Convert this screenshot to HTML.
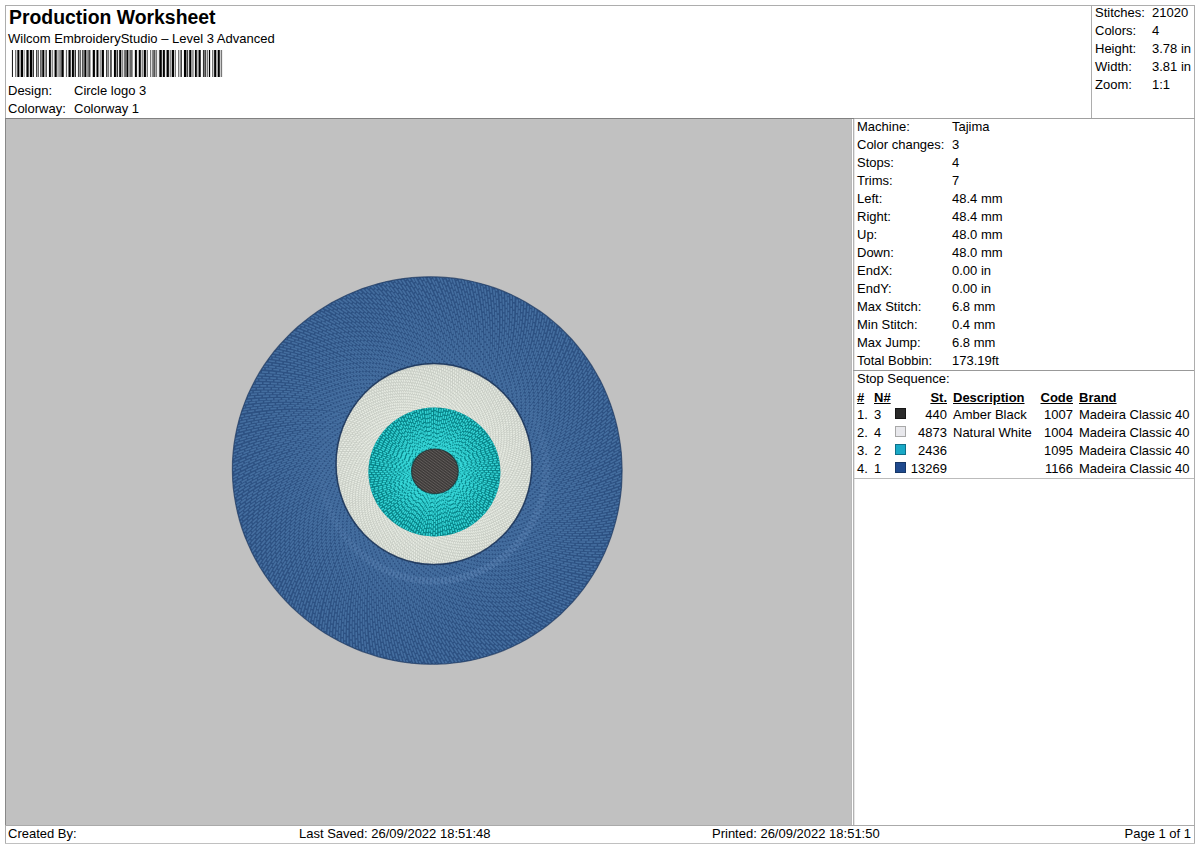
<!DOCTYPE html>
<html><head><meta charset="utf-8">
<style>
html,body{margin:0;padding:0;background:#fff;width:1200px;height:848px;overflow:hidden;position:relative;}
body{font-family:"Liberation Sans",sans-serif;color:#000;font-size:13px;-webkit-text-stroke:0.03px #000;}
.a{position:absolute;white-space:pre;line-height:15px;}
.ln{position:absolute;background:#adadad;}
.r{text-align:right;}
.c{position:absolute;border-radius:50%;}
.h{font-weight:bold;text-decoration:underline;}
</style></head><body>
<!-- outer borders -->
<div class="ln" style="left:5px;top:5px;width:1190px;height:1px;"></div>
<div class="ln" style="left:5px;top:5px;width:1px;height:839px;"></div>
<div class="ln" style="left:1194px;top:5px;width:1px;height:839px;"></div>
<div class="ln" style="left:5px;top:843px;width:1190px;height:1px;background:#c0c0c0;"></div>
<!-- header divider -->
<div class="ln" style="left:5px;top:118px;width:849px;height:1px;background:#808080;"></div><div class="ln" style="left:854px;top:118px;width:341px;height:1px;background:#a0a0a0;"></div>
<div class="ln" style="left:1091px;top:5px;width:1px;height:113px;"></div>

<div class="a" style="left:9px;top:6px;font-size:19.4px;font-weight:bold;line-height:22px;">Production Worksheet</div>
<div class="a" style="left:8px;top:31px;">Wilcom EmbroideryStudio – Level 3 Advanced</div>
<svg style="position:absolute;left:0;top:50px" width="230" height="27" shape-rendering="crispEdges"><rect x="11" y="0" width="1" height="27" fill="#eee"/><rect x="12" y="0" width="1" height="27" fill="#222"/><rect x="15" y="0" width="1" height="27" fill="#777"/><rect x="16" y="0" width="1" height="27" fill="#ccc"/><rect x="17" y="0" width="1" height="27" fill="#555"/><rect x="18" y="0" width="1" height="27" fill="#000"/><rect x="19" y="0" width="1" height="27" fill="#999"/><rect x="20" y="0" width="1" height="27" fill="#aaa"/><rect x="21" y="0" width="1" height="27" fill="#000"/><rect x="22" y="0" width="1" height="27" fill="#000"/><rect x="23" y="0" width="1" height="27" fill="#ccc"/><rect x="24" y="0" width="1" height="27" fill="#aaa"/><rect x="26" y="0" width="1" height="27" fill="#666"/><rect x="27" y="0" width="1" height="27" fill="#000"/><rect x="28" y="0" width="1" height="27" fill="#555"/><rect x="29" y="0" width="1" height="27" fill="#ccc"/><rect x="30" y="0" width="1" height="27" fill="#000"/><rect x="31" y="0" width="1" height="27" fill="#000"/><rect x="32" y="0" width="1" height="27" fill="#999"/><rect x="33" y="0" width="1" height="27" fill="#333"/><rect x="36" y="0" width="1" height="27" fill="#444"/><rect x="37" y="0" width="1" height="27" fill="#aaa"/><rect x="38" y="0" width="1" height="27" fill="#666"/><rect x="40" y="0" width="1" height="27" fill="#666"/><rect x="41" y="0" width="1" height="27" fill="#888"/><rect x="42" y="0" width="1" height="27" fill="#444"/><rect x="43" y="0" width="1" height="27" fill="#000"/><rect x="44" y="0" width="1" height="27" fill="#aaa"/><rect x="45" y="0" width="1" height="27" fill="#999"/><rect x="46" y="0" width="1" height="27" fill="#555"/><rect x="48" y="0" width="1" height="27" fill="#eee"/><rect x="49" y="0" width="1" height="27" fill="#000"/><rect x="50" y="0" width="1" height="27" fill="#222"/><rect x="51" y="0" width="1" height="27" fill="#ccc"/><rect x="52" y="0" width="1" height="27" fill="#888"/><rect x="53" y="0" width="1" height="27" fill="#eee"/><rect x="54" y="0" width="1" height="27" fill="#888"/><rect x="55" y="0" width="1" height="27" fill="#000"/><rect x="56" y="0" width="1" height="27" fill="#444"/><rect x="57" y="0" width="1" height="27" fill="#bbb"/><rect x="58" y="0" width="1" height="27" fill="#aaa"/><rect x="59" y="0" width="1" height="27" fill="#999"/><rect x="60" y="0" width="1" height="27" fill="#888"/><rect x="61" y="0" width="1" height="27" fill="#555"/><rect x="62" y="0" width="1" height="27" fill="#000"/><rect x="63" y="0" width="1" height="27" fill="#444"/><rect x="65" y="0" width="1" height="27" fill="#eee"/><rect x="66" y="0" width="1" height="27" fill="#666"/><rect x="67" y="0" width="1" height="27" fill="#eee"/><rect x="68" y="0" width="1" height="27" fill="#777"/><rect x="69" y="0" width="1" height="27" fill="#000"/><rect x="70" y="0" width="1" height="27" fill="#444"/><rect x="71" y="0" width="1" height="27" fill="#ddd"/><rect x="72" y="0" width="1" height="27" fill="#000"/><rect x="73" y="0" width="1" height="27" fill="#111"/><rect x="74" y="0" width="1" height="27" fill="#999"/><rect x="75" y="0" width="1" height="27" fill="#333"/><rect x="77" y="0" width="1" height="27" fill="#eee"/><rect x="78" y="0" width="1" height="27" fill="#444"/><rect x="79" y="0" width="1" height="27" fill="#999"/><rect x="80" y="0" width="1" height="27" fill="#666"/><rect x="81" y="0" width="1" height="27" fill="#eee"/><rect x="82" y="0" width="1" height="27" fill="#555"/><rect x="83" y="0" width="1" height="27" fill="#888"/><rect x="84" y="0" width="1" height="27" fill="#555"/><rect x="85" y="0" width="1" height="27" fill="#000"/><rect x="86" y="0" width="1" height="27" fill="#999"/><rect x="87" y="0" width="1" height="27" fill="#999"/><rect x="88" y="0" width="1" height="27" fill="#777"/><rect x="89" y="0" width="1" height="27" fill="#444"/><rect x="90" y="0" width="1" height="27" fill="#aaa"/><rect x="92" y="0" width="1" height="27" fill="#bbb"/><rect x="93" y="0" width="1" height="27" fill="#000"/><rect x="94" y="0" width="1" height="27" fill="#111"/><rect x="95" y="0" width="1" height="27" fill="#eee"/><rect x="96" y="0" width="1" height="27" fill="#777"/><rect x="97" y="0" width="1" height="27" fill="#000"/><rect x="98" y="0" width="1" height="27" fill="#888"/><rect x="99" y="0" width="1" height="27" fill="#ddd"/><rect x="100" y="0" width="1" height="27" fill="#999"/><rect x="101" y="0" width="1" height="27" fill="#aaa"/><rect x="102" y="0" width="1" height="27" fill="#000"/><rect x="103" y="0" width="1" height="27" fill="#111"/><rect x="106" y="0" width="1" height="27" fill="#444"/><rect x="107" y="0" width="1" height="27" fill="#999"/><rect x="108" y="0" width="1" height="27" fill="#777"/><rect x="109" y="0" width="1" height="27" fill="#eee"/><rect x="110" y="0" width="1" height="27" fill="#555"/><rect x="111" y="0" width="1" height="27" fill="#666"/><rect x="113" y="0" width="1" height="27" fill="#eee"/><rect x="114" y="0" width="1" height="27" fill="#000"/><rect x="115" y="0" width="1" height="27" fill="#111"/><rect x="116" y="0" width="1" height="27" fill="#999"/><rect x="117" y="0" width="1" height="27" fill="#333"/><rect x="118" y="0" width="1" height="27" fill="#eee"/><rect x="119" y="0" width="1" height="27" fill="#333"/><rect x="120" y="0" width="1" height="27" fill="#000"/><rect x="121" y="0" width="1" height="27" fill="#aaa"/><rect x="122" y="0" width="1" height="27" fill="#888"/><rect x="123" y="0" width="1" height="27" fill="#ddd"/><rect x="124" y="0" width="1" height="27" fill="#777"/><rect x="125" y="0" width="1" height="27" fill="#666"/><rect x="126" y="0" width="1" height="27" fill="#666"/><rect x="127" y="0" width="1" height="27" fill="#000"/><rect x="128" y="0" width="1" height="27" fill="#999"/><rect x="129" y="0" width="1" height="27" fill="#999"/><rect x="130" y="0" width="1" height="27" fill="#666"/><rect x="131" y="0" width="1" height="27" fill="#666"/><rect x="132" y="0" width="1" height="27" fill="#999"/><rect x="134" y="0" width="1" height="27" fill="#ddd"/><rect x="135" y="0" width="1" height="27" fill="#000"/><rect x="136" y="0" width="1" height="27" fill="#222"/><rect x="137" y="0" width="1" height="27" fill="#eee"/><rect x="138" y="0" width="1" height="27" fill="#bbb"/><rect x="139" y="0" width="1" height="27" fill="#000"/><rect x="140" y="0" width="1" height="27" fill="#333"/><rect x="141" y="0" width="1" height="27" fill="#ccc"/><rect x="142" y="0" width="1" height="27" fill="#888"/><rect x="143" y="0" width="1" height="27" fill="#bbb"/><rect x="144" y="0" width="1" height="27" fill="#000"/><rect x="145" y="0" width="1" height="27" fill="#111"/><rect x="146" y="0" width="1" height="27" fill="#ccc"/><rect x="147" y="0" width="1" height="27" fill="#777"/><rect x="150" y="0" width="1" height="27" fill="#777"/><rect x="151" y="0" width="1" height="27" fill="#ddd"/><rect x="152" y="0" width="1" height="27" fill="#888"/><rect x="153" y="0" width="1" height="27" fill="#777"/><rect x="154" y="0" width="1" height="27" fill="#555"/><rect x="155" y="0" width="1" height="27" fill="#aaa"/><rect x="156" y="0" width="1" height="27" fill="#777"/><rect x="157" y="0" width="1" height="27" fill="#eee"/><rect x="158" y="0" width="1" height="27" fill="#eee"/><rect x="159" y="0" width="1" height="27" fill="#555"/><rect x="160" y="0" width="1" height="27" fill="#000"/><rect x="161" y="0" width="1" height="27" fill="#333"/><rect x="162" y="0" width="1" height="27" fill="#ccc"/><rect x="163" y="0" width="1" height="27" fill="#000"/><rect x="164" y="0" width="1" height="27" fill="#222"/><rect x="165" y="0" width="1" height="27" fill="#eee"/><rect x="166" y="0" width="1" height="27" fill="#888"/><rect x="167" y="0" width="1" height="27" fill="#000"/><rect x="168" y="0" width="1" height="27" fill="#222"/><rect x="169" y="0" width="1" height="27" fill="#ccc"/><rect x="170" y="0" width="1" height="27" fill="#888"/><rect x="171" y="0" width="1" height="27" fill="#bbb"/><rect x="172" y="0" width="1" height="27" fill="#000"/><rect x="173" y="0" width="1" height="27" fill="#000"/><rect x="174" y="0" width="1" height="27" fill="#ccc"/><rect x="175" y="0" width="1" height="27" fill="#777"/><rect x="178" y="0" width="1" height="27" fill="#777"/><rect x="179" y="0" width="1" height="27" fill="#ccc"/><rect x="180" y="0" width="1" height="27" fill="#888"/><rect x="181" y="0" width="1" height="27" fill="#444"/><rect x="183" y="0" width="1" height="27" fill="#eee"/><rect x="184" y="0" width="1" height="27" fill="#000"/><rect x="185" y="0" width="1" height="27" fill="#000"/><rect x="186" y="0" width="1" height="27" fill="#888"/><rect x="187" y="0" width="1" height="27" fill="#444"/><rect x="188" y="0" width="1" height="27" fill="#ddd"/><rect x="189" y="0" width="1" height="27" fill="#333"/><rect x="190" y="0" width="1" height="27" fill="#000"/><rect x="191" y="0" width="1" height="27" fill="#999"/><rect x="192" y="0" width="1" height="27" fill="#999"/><rect x="193" y="0" width="1" height="27" fill="#aaa"/><rect x="194" y="0" width="1" height="27" fill="#eee"/><rect x="195" y="0" width="1" height="27" fill="#000"/><rect x="196" y="0" width="1" height="27" fill="#333"/><rect x="197" y="0" width="1" height="27" fill="#bbb"/><rect x="198" y="0" width="1" height="27" fill="#888"/><rect x="199" y="0" width="1" height="27" fill="#000"/><rect x="200" y="0" width="1" height="27" fill="#444"/><rect x="202" y="0" width="1" height="27" fill="#eee"/><rect x="203" y="0" width="1" height="27" fill="#333"/><rect x="204" y="0" width="1" height="27" fill="#777"/><rect x="205" y="0" width="1" height="27" fill="#444"/><rect x="206" y="0" width="1" height="27" fill="#ccc"/><rect x="207" y="0" width="1" height="27" fill="#777"/><rect x="208" y="0" width="1" height="27" fill="#ddd"/><rect x="209" y="0" width="1" height="27" fill="#000"/><rect x="210" y="0" width="1" height="27" fill="#ddd"/><rect x="212" y="0" width="1" height="27" fill="#777"/><rect x="213" y="0" width="1" height="27" fill="#ccc"/><rect x="214" y="0" width="1" height="27" fill="#222"/><rect x="215" y="0" width="1" height="27" fill="#000"/><rect x="216" y="0" width="1" height="27" fill="#aaa"/><rect x="217" y="0" width="1" height="27" fill="#aaa"/><rect x="218" y="0" width="1" height="27" fill="#000"/><rect x="219" y="0" width="1" height="27" fill="#333"/><rect x="220" y="0" width="1" height="27" fill="#ccc"/><rect x="221" y="0" width="1" height="27" fill="#777"/><rect x="222" y="0" width="1" height="27" fill="#eee"/></svg>
<div class="a" style="left:8px;top:83px;">Design:</div>
<div class="a" style="left:74px;top:83px;">Circle logo 3</div>
<div class="a" style="left:8px;top:101px;">Colorway:</div>
<div class="a" style="left:74px;top:101px;">Colorway 1</div>

<div class="a" style="left:1095px;top:5px;">Stitches:</div><div class="a" style="left:1152px;top:5px;">21020</div>
<div class="a" style="left:1095px;top:23px;">Colors:</div><div class="a" style="left:1152px;top:23px;">4</div>
<div class="a" style="left:1095px;top:41px;">Height:</div><div class="a" style="left:1152px;top:41px;">3.78 in</div>
<div class="a" style="left:1095px;top:59px;">Width:</div><div class="a" style="left:1152px;top:59px;">3.81 in</div>
<div class="a" style="left:1095px;top:77px;">Zoom:</div><div class="a" style="left:1152px;top:77px;">1:1</div>

<!-- design area -->
<div style="position:absolute;left:6px;top:119px;width:846px;height:706px;background:#c1c1c1;"></div>
<div class="ln" style="left:851px;top:119px;width:1px;height:706px;background:#b9b9b9;"></div><div class="ln" style="left:853px;top:119px;width:1px;height:706px;background:#b3b3b3;"></div><div class="ln" style="left:854px;top:119px;width:1px;height:706px;background:#e6e6e6;"></div>
<div class="ln" style="left:5px;top:825px;width:1190px;height:1px;background:#aaa;"></div>

<!--EMB--><svg style="position:absolute;left:0;top:0" width="852" height="825" viewBox="0 0 852 825"><defs><clipPath id="cb"><path d="M622.1 470.0L621.9 478.4L621.5 486.9L620.6 495.3L619.4 503.7L617.9 512.0L616.0 520.2L613.7 528.4L611.1 536.5L608.2 544.4L604.9 552.2L601.2 559.9L597.3 567.4L593.0 574.8L588.3 581.9L583.4 588.9L578.1 595.6L572.6 602.0L566.7 608.2L560.6 614.2L554.2 619.8L547.6 625.2L540.7 630.3L533.6 635.0L526.3 639.4L518.8 643.5L511.1 647.2L503.3 650.6L495.3 653.6L487.2 656.2L479.0 658.5L470.7 660.4L462.3 661.9L453.9 663.0L445.5 663.8L437.0 664.2L428.5 664.2L420.0 663.9L411.6 663.2L403.2 662.1L394.9 660.7L386.6 658.9L378.4 656.8L370.4 654.3L362.4 651.6L354.6 648.4L346.9 645.0L339.3 641.3L332.0 637.2L324.7 632.9L317.7 628.2L310.9 623.3L304.2 618.1L297.8 612.6L291.6 606.9L285.7 600.8L280.0 594.6L274.6 588.1L269.5 581.4L264.6 574.4L260.0 567.3L255.8 559.9L251.9 552.4L248.3 544.6L245.0 536.8L242.1 528.8L239.6 520.6L237.5 512.4L235.7 504.0L234.3 495.6L233.2 487.1L232.6 478.6L232.4 470.0L232.5 461.4L233.1 452.9L234.0 444.4L235.4 435.9L237.1 427.6L239.2 419.3L241.7 411.1L244.6 403.1L247.8 395.1L251.4 387.4L255.3 379.8L259.5 372.4L264.1 365.2L268.9 358.3L274.1 351.5L279.6 345.0L285.3 338.8L291.3 332.8L297.5 327.0L304.0 321.6L310.6 316.4L317.5 311.5L324.6 306.9L331.9 302.6L339.3 298.7L346.9 295.0L354.6 291.7L362.5 288.6L370.5 286.0L378.6 283.6L386.7 281.6L395.0 279.9L403.3 278.6L411.7 277.7L420.1 277.1L428.5 276.8L436.9 276.9L445.4 277.4L453.7 278.2L462.1 279.4L470.4 281.0L478.6 283.0L486.8 285.3L494.8 287.9L502.7 290.9L510.4 294.3L518.0 298.0L525.5 302.0L532.7 306.4L539.8 311.1L546.6 316.1L553.2 321.4L559.6 327.0L565.6 332.9L571.5 339.0L577.0 345.4L582.3 352.0L587.2 358.8L591.9 365.9L596.2 373.2L600.3 380.6L604.0 388.2L607.3 395.9L610.3 403.8L613.0 411.8L615.4 419.9L617.4 428.1L619.0 436.4L620.3 444.7L621.3 453.1L621.8 461.6Z"/></clipPath><clipPath id="cw"><ellipse cx="434" cy="464" rx="97.5" ry="100"/></clipPath><clipPath id="ct"><ellipse cx="434.4" cy="472" rx="66" ry="64.5"/></clipPath><clipPath id="cd"><ellipse cx="434.9" cy="471.3" rx="23.5" ry="22.5"/></clipPath></defs><path d="M622.1 470.0L621.9 478.4L621.5 486.9L620.6 495.3L619.4 503.7L617.9 512.0L616.0 520.2L613.7 528.4L611.1 536.5L608.2 544.4L604.9 552.2L601.2 559.9L597.3 567.4L593.0 574.8L588.3 581.9L583.4 588.9L578.1 595.6L572.6 602.0L566.7 608.2L560.6 614.2L554.2 619.8L547.6 625.2L540.7 630.3L533.6 635.0L526.3 639.4L518.8 643.5L511.1 647.2L503.3 650.6L495.3 653.6L487.2 656.2L479.0 658.5L470.7 660.4L462.3 661.9L453.9 663.0L445.5 663.8L437.0 664.2L428.5 664.2L420.0 663.9L411.6 663.2L403.2 662.1L394.9 660.7L386.6 658.9L378.4 656.8L370.4 654.3L362.4 651.6L354.6 648.4L346.9 645.0L339.3 641.3L332.0 637.2L324.7 632.9L317.7 628.2L310.9 623.3L304.2 618.1L297.8 612.6L291.6 606.9L285.7 600.8L280.0 594.6L274.6 588.1L269.5 581.4L264.6 574.4L260.0 567.3L255.8 559.9L251.9 552.4L248.3 544.6L245.0 536.8L242.1 528.8L239.6 520.6L237.5 512.4L235.7 504.0L234.3 495.6L233.2 487.1L232.6 478.6L232.4 470.0L232.5 461.4L233.1 452.9L234.0 444.4L235.4 435.9L237.1 427.6L239.2 419.3L241.7 411.1L244.6 403.1L247.8 395.1L251.4 387.4L255.3 379.8L259.5 372.4L264.1 365.2L268.9 358.3L274.1 351.5L279.6 345.0L285.3 338.8L291.3 332.8L297.5 327.0L304.0 321.6L310.6 316.4L317.5 311.5L324.6 306.9L331.9 302.6L339.3 298.7L346.9 295.0L354.6 291.7L362.5 288.6L370.5 286.0L378.6 283.6L386.7 281.6L395.0 279.9L403.3 278.6L411.7 277.7L420.1 277.1L428.5 276.8L436.9 276.9L445.4 277.4L453.7 278.2L462.1 279.4L470.4 281.0L478.6 283.0L486.8 285.3L494.8 287.9L502.7 290.9L510.4 294.3L518.0 298.0L525.5 302.0L532.7 306.4L539.8 311.1L546.6 316.1L553.2 321.4L559.6 327.0L565.6 332.9L571.5 339.0L577.0 345.4L582.3 352.0L587.2 358.8L591.9 365.9L596.2 373.2L600.3 380.6L604.0 388.2L607.3 395.9L610.3 403.8L613.0 411.8L615.4 419.9L617.4 428.1L619.0 436.4L620.3 444.7L621.3 453.1L621.8 461.6Z" fill="#2d5182"/><g clip-path="url(#cb)"><path d="M521.0 467.9Q574.4 446.9 618.8 400.0M520.8 473.9Q575.5 456.4 623.0 412.6M520.2 479.6Q576.0 465.6 626.2 424.9M519.2 485.5Q575.8 475.3 628.7 438.0M517.9 491.3Q575.0 484.9 630.3 451.2M516.1 497.1Q573.5 494.5 631.0 464.6M514.1 502.3Q571.5 503.3 630.8 477.0M511.6 507.7Q568.9 512.4 629.8 490.1M508.7 513.0Q565.5 521.6 627.8 503.3M505.5 518.0Q561.6 530.3 625.0 516.2M502.0 522.7Q557.2 538.6 621.4 528.6M498.3 527.2Q552.3 546.6 617.0 540.8M494.1 531.6Q546.6 554.6 611.6 553.2M489.8 535.5Q540.7 561.8 605.6 564.6M485.2 539.1Q534.4 568.7 598.9 575.5M480.1 542.7Q527.1 575.5 591.0 586.8M475.1 545.7Q519.8 581.5 582.9 596.8M469.9 548.4Q512.1 587.0 574.0 606.4M464.4 550.8Q503.9 592.1 564.3 615.6M458.9 552.7Q495.6 596.5 554.4 623.9M453.2 554.3Q487.0 600.4 543.8 631.5M447.4 555.6Q478.0 603.8 532.7 638.5M441.5 556.5Q468.9 606.6 521.1 644.8M435.3 557.0Q459.1 608.8 508.6 650.5M429.6 557.1Q449.9 610.3 496.6 655.1M423.7 556.8Q440.5 611.2 484.1 658.9M417.6 556.1Q430.7 611.5 470.9 662.0M411.8 555.1Q421.2 611.2 458.0 664.2M406.0 553.6Q411.6 610.3 444.8 665.5M400.2 551.7Q401.9 608.6 431.2 666.0M394.9 549.6Q392.9 606.5 418.4 665.6M389.6 547.1Q383.9 603.8 405.5 664.4M384.3 544.2Q374.8 600.3 392.2 662.2M379.4 541.0Q366.2 596.4 379.5 659.3M374.5 537.4Q357.5 591.8 366.5 655.4M370.1 533.6Q349.5 586.8 354.3 650.9M365.8 529.4Q341.7 581.1 342.2 645.4M361.9 525.1Q334.4 575.1 330.6 639.3M358.3 520.5Q327.6 568.7 319.6 632.5M354.8 515.5Q320.9 561.5 308.6 624.6M351.8 510.3Q314.8 553.9 298.2 616.0M349.2 505.2Q309.6 546.5 289.0 607.4M346.9 499.8Q304.6 538.3 279.9 597.7M344.9 494.0Q300.0 529.6 271.3 587.2M343.4 488.5Q296.3 521.2 264.0 576.9M342.3 482.8Q293.1 512.4 257.2 565.9M341.4 476.7Q290.3 502.7 250.7 553.7M341.0 470.8Q288.3 493.5 245.4 541.7M341.0 465.2Q287.0 484.5 241.0 529.9M341.5 459.1Q286.2 474.7 237.2 516.9M342.2 453.5Q286.0 465.6 234.5 504.7M343.4 447.5Q286.5 455.7 232.4 491.2M344.9 441.9Q287.6 446.6 231.3 478.5M346.9 436.3Q289.4 437.2 231.0 465.4M349.1 431.0Q291.7 428.1 231.6 452.5M351.8 425.7Q294.7 419.1 233.1 439.5M354.8 420.6Q298.3 410.2 235.5 426.4M358.3 415.5Q302.6 401.3 238.8 413.2M361.8 411.0Q307.2 393.3 242.7 401.2M365.7 406.6Q312.4 385.5 247.5 389.1M370.0 402.5Q318.1 377.9 253.2 377.3M374.5 398.6Q324.4 370.6 259.7 365.8M379.3 395.1Q331.2 363.9 266.9 354.8M384.3 391.8Q338.4 357.5 274.9 344.2M389.3 389.0Q345.8 351.9 283.2 334.6M394.9 386.4Q354.0 346.3 292.9 324.8M400.4 384.2Q362.2 341.6 302.6 316.2M405.9 382.4Q370.7 337.5 312.8 308.3M411.8 380.9Q379.7 333.7 324.0 300.7M417.7 379.9Q388.8 330.7 335.4 294.1M423.6 379.2Q398.0 328.2 347.1 288.3M429.6 378.9Q407.5 326.3 359.5 283.1M435.5 379.0Q416.9 325.1 371.9 278.9M441.3 379.5Q426.2 324.5 384.3 275.5M447.1 380.3Q435.8 324.5 397.2 272.8M453.0 381.6Q445.4 325.2 410.4 271.1M458.9 383.3Q455.3 326.5 424.1 270.1M464.4 385.3Q464.5 328.3 437.0 270.1M469.7 387.6Q473.6 330.8 450.0 270.9M475.0 390.3Q482.7 333.9 463.1 272.6M480.2 393.4Q491.7 337.6 476.4 275.2M485.1 396.8Q500.3 341.9 489.2 278.6M489.8 400.6Q508.7 346.8 501.9 282.8M494.0 404.4Q516.2 351.9 513.5 287.6M498.2 408.7Q524.0 357.8 525.6 293.6M501.9 413.2Q531.0 364.0 536.9 300.0M505.4 417.9Q537.7 370.8 547.8 307.3M508.6 422.9Q543.9 378.0 558.3 315.3M511.5 428.1Q549.7 385.6 568.2 324.0M514.0 433.5Q555.1 393.7 577.7 333.5M516.1 439.0Q559.7 401.9 586.3 343.2M517.8 444.6Q563.8 410.4 594.2 353.6M519.2 450.4Q567.4 419.3 601.6 364.6M520.2 456.2Q570.4 428.4 608.2 376.2M520.8 462.0Q572.7 437.5 613.9 387.8" stroke="#4973a5" stroke-width="1.6" stroke-opacity="0.85" fill="none" stroke-dasharray="6 1.5" stroke-dashoffset="0.00"/><path d="M521.0 469.3Q574.7 449.1 619.9 402.9M520.7 475.3Q575.7 458.7 623.9 415.6M520.0 481.2Q576.0 468.2 627.0 428.4M518.9 487.1Q575.7 477.9 629.2 441.6M517.4 492.9Q574.7 487.4 630.5 454.7M515.7 498.2Q573.2 496.3 631.0 467.1M513.5 503.7Q570.9 505.6 630.6 480.2M510.8 509.1Q568.0 514.9 629.3 493.6M508.0 514.1Q564.7 523.5 627.3 506.2M504.7 519.2Q560.6 532.3 624.2 519.2M501.1 523.8Q556.1 540.6 620.4 531.6M497.2 528.4Q550.9 548.7 615.6 544.1M493.1 532.5Q545.3 556.3 610.3 555.8M488.5 536.5Q539.0 563.8 603.8 567.6M483.9 540.1Q532.4 570.6 596.8 578.7M479.0 543.4Q525.5 576.9 589.3 589.1M473.8 546.4Q518.0 582.9 580.8 599.2M468.5 549.0Q510.0 588.4 571.5 608.9M462.9 551.3Q501.6 593.4 561.6 617.9M457.3 553.2Q493.3 597.6 551.6 626.0M451.8 554.7Q484.8 601.3 541.1 633.3M445.9 555.9Q475.7 604.6 529.7 640.2M439.9 556.7Q466.4 607.2 517.9 646.3M433.8 557.1Q456.8 609.3 505.5 651.8M427.9 557.0Q447.3 610.6 493.0 656.2M422.2 556.7Q438.1 611.4 480.8 659.8M416.3 555.9Q428.5 611.5 467.9 662.6M410.3 554.7Q418.7 611.0 454.6 664.6M404.6 553.2Q409.2 609.9 441.4 665.7M398.9 551.2Q399.7 608.2 428.0 666.0M393.5 549.0Q390.6 605.9 415.1 665.4M388.3 546.4Q381.6 603.0 402.2 663.9M383.2 543.5Q372.8 599.5 389.2 661.6M378.1 540.1Q363.9 595.3 376.2 658.4M373.5 536.5Q355.7 590.7 363.7 654.5M369.1 532.6Q347.7 585.5 351.4 649.7M364.8 528.4Q339.9 579.7 339.2 643.9M361.0 523.9Q332.7 573.5 327.8 637.6M357.2 519.0Q325.6 566.6 316.3 630.2M354.2 514.4Q319.6 559.9 306.3 622.8M351.1 509.0Q313.5 552.1 295.8 613.9M348.5 503.7Q308.1 544.2 286.3 604.7M346.4 498.4Q303.4 536.2 277.8 595.3M344.5 492.6Q299.0 527.4 269.4 584.6M343.1 487.0Q295.4 518.8 262.1 574.0M342.0 481.3Q292.3 510.0 255.5 562.9M341.3 475.4Q289.8 500.7 249.4 551.1M341.0 469.5Q287.9 491.4 244.3 539.1M341.1 463.7Q286.7 482.1 240.0 526.8M341.6 457.7Q286.1 472.5 236.5 514.0M342.5 451.8Q286.1 462.9 233.8 501.0M343.8 446.1Q286.7 453.5 232.0 488.2M345.4 440.4Q288.1 443.9 231.1 474.9M347.5 434.8Q290.0 434.6 231.1 461.6M349.8 429.6Q292.4 425.8 231.9 449.2M352.6 424.2Q295.6 416.5 233.7 435.7M355.7 419.3Q299.3 407.9 236.2 423.1M359.1 414.4Q303.6 399.4 239.7 410.3M362.9 409.8Q308.6 391.1 244.0 397.8M366.8 405.6Q313.8 383.5 248.9 386.1M371.1 401.5Q319.7 376.0 254.8 374.3M375.7 397.7Q326.1 368.9 261.5 363.0M380.7 394.1Q333.2 362.0 269.1 351.8M385.4 391.2Q340.0 356.2 276.7 342.0M390.9 388.2Q348.1 350.2 285.9 331.7M396.2 385.8Q356.0 345.1 295.2 322.7M401.9 383.7Q364.5 340.4 305.3 314.0M407.4 382.0Q372.9 336.5 315.5 306.3M413.4 380.6Q382.0 332.9 326.9 298.9M419.1 379.7Q391.0 330.0 338.2 292.6M425.1 379.1Q400.3 327.7 350.2 286.9M431.1 378.9Q410.0 326.0 362.7 281.9M437.1 379.1Q419.5 324.9 375.3 277.8M442.8 379.7Q428.8 324.5 387.8 274.7M448.8 380.7Q438.6 324.6 400.9 272.3M454.6 382.0Q448.1 325.5 414.1 270.7M460.4 383.8Q457.8 326.9 427.5 270.0M465.8 385.8Q466.8 328.9 440.4 270.2M471.2 388.3Q476.0 331.5 453.5 271.3M476.4 391.1Q485.0 334.8 466.5 273.1M481.4 394.2Q493.8 338.6 479.5 275.9M486.3 397.7Q502.3 343.0 492.3 279.5M491.0 401.6Q510.8 348.1 505.1 284.1M495.2 405.6Q518.5 353.5 517.1 289.3M499.3 410.0Q526.0 359.6 528.9 295.3M503.0 414.6Q533.0 366.0 540.2 302.1M506.3 419.1Q539.3 372.5 550.5 309.2M509.5 424.4Q545.7 380.2 561.4 317.8M512.2 429.6Q551.3 387.9 571.1 326.7M514.5 434.9Q556.3 395.7 579.9 335.8M516.6 440.3Q560.8 403.9 588.3 345.7M518.2 446.0Q564.8 412.6 596.1 356.3M519.5 451.8Q568.2 421.5 603.3 367.5M520.4 457.6Q571.0 430.5 609.6 378.9M520.9 463.4Q573.2 439.7 615.1 390.6" stroke="#4973a5" stroke-width="1.6" stroke-opacity="0.85" fill="none" stroke-dasharray="6 1.5" stroke-dashoffset="1.88"/><path d="M520.9 471.0Q575.1 451.8 621.1 406.4M520.6 476.7Q575.8 460.9 624.7 418.5M519.8 482.5Q576.0 470.4 627.5 431.3M518.6 488.3Q575.5 479.9 629.6 444.3M517.0 494.2Q574.4 489.6 630.7 457.7M515.1 499.8Q572.6 499.1 631.0 471.0M512.8 505.1Q570.3 508.0 630.4 483.7M510.1 510.5Q567.2 517.2 628.9 496.9M507.2 515.4Q563.8 525.7 626.6 509.4M503.9 520.3Q559.6 534.4 623.3 522.3M500.1 525.1Q554.7 542.9 619.2 535.1M496.2 529.4Q549.5 550.7 614.4 547.1M491.8 533.7Q543.6 558.4 608.5 559.2M487.5 537.3Q537.6 565.3 602.4 570.1M482.6 541.0Q530.7 572.3 594.9 581.4M477.6 544.2Q523.5 578.5 587.0 591.9M472.4 547.1Q515.9 584.4 578.3 601.9M467.3 549.5Q508.3 589.5 569.5 610.8M461.5 551.8Q499.6 594.5 559.2 620.0M456.1 553.6Q491.4 598.5 549.3 627.6M450.4 555.0Q482.6 602.2 538.4 635.0M444.4 556.1Q473.3 605.3 526.8 641.8M438.4 556.8Q464.0 607.8 514.8 647.8M432.6 557.1Q454.7 609.6 502.8 652.8M426.4 557.0Q444.8 610.9 489.8 657.2M420.7 556.5Q435.7 611.5 477.6 660.5M414.9 555.7Q426.2 611.5 464.9 663.1M408.7 554.3Q416.1 610.8 451.0 665.0M403.1 552.7Q406.8 609.5 438.0 665.9M397.5 550.7Q397.3 607.6 424.6 665.9M392.3 548.4Q388.4 605.2 412.1 665.1M387.0 545.7Q379.3 602.1 398.9 663.4M381.9 542.7Q370.6 598.5 386.0 660.9M377.0 539.3Q362.0 594.3 373.2 657.6M372.3 535.6Q353.6 589.4 360.5 653.3M367.8 531.4Q345.4 583.9 347.9 648.1M363.9 527.4Q338.2 578.3 336.6 642.6M359.9 522.6Q330.7 571.7 324.6 635.7M356.5 518.0Q324.1 565.0 313.9 628.5M353.3 513.0Q317.9 557.8 303.4 620.5M350.5 507.9Q312.2 550.3 293.7 611.9M348.0 502.4Q306.9 542.3 284.2 602.5M345.8 496.8Q302.1 533.8 275.4 592.4M344.1 491.2Q298.0 525.3 267.4 582.0M342.8 485.6Q294.6 516.7 260.4 571.3M341.8 479.8Q291.7 507.7 253.9 560.0M341.2 473.7Q289.2 498.1 247.9 547.7M341.0 468.1Q287.6 489.2 243.2 536.1M341.2 462.1Q286.5 479.5 239.0 523.4M341.8 456.2Q286.0 470.0 235.7 510.7M342.8 450.3Q286.2 460.4 233.2 497.6M344.1 444.8Q287.0 451.3 231.8 485.2M345.9 438.9Q288.5 441.5 231.0 471.4M348.0 433.5Q290.5 432.4 231.2 458.6M350.5 428.1Q293.3 423.2 232.3 445.4M353.4 422.9Q296.6 414.2 234.3 432.4M356.4 418.1Q300.2 406.0 236.9 420.2M360.0 413.3Q304.8 397.4 240.6 407.3M363.9 408.7Q309.9 389.1 245.2 394.8M367.8 404.5Q315.2 381.6 250.3 383.2M372.2 400.6Q321.2 374.3 256.3 371.6M376.9 396.8Q327.8 367.1 263.3 360.1M381.8 393.4Q334.8 360.6 270.8 349.4M386.8 390.4Q342.1 354.6 279.1 339.2M392.0 387.7Q349.8 349.1 287.8 329.7M397.5 385.3Q357.9 344.0 297.5 320.6M403.1 383.3Q366.3 339.5 307.5 312.3M409.0 381.6Q375.3 335.4 318.6 304.2M414.9 380.3Q384.4 332.1 329.9 297.2M420.6 379.5Q393.3 329.4 341.2 291.1M426.5 379.0Q402.7 327.2 353.2 285.6M432.6 378.9Q412.4 325.6 365.9 280.8M438.6 379.2Q421.9 324.7 378.4 277.0M444.2 379.9Q431.0 324.5 390.7 274.1M450.3 381.0Q441.0 324.8 404.3 271.8M456.0 382.4Q450.5 325.8 417.4 270.5M461.5 384.2Q459.7 327.3 430.2 270.0M467.3 386.5Q469.4 329.6 444.1 270.4M472.5 389.0Q478.3 332.3 456.8 271.7M477.8 391.9Q487.4 335.8 470.1 273.8M482.5 395.0Q495.7 339.6 482.4 276.6M487.3 398.5Q504.2 344.1 495.1 280.4M491.9 402.4Q512.3 349.2 507.5 285.1M496.1 406.5Q520.2 354.8 519.7 290.5M500.2 411.1Q527.8 361.1 531.7 296.9M503.8 415.6Q534.6 367.6 542.7 303.8M507.2 420.6Q541.1 374.6 553.5 311.5M510.2 425.6Q547.1 382.0 563.7 319.8M512.7 430.7Q552.4 389.5 573.0 328.5M515.1 436.3Q557.5 397.9 582.2 338.4M517.0 441.9Q561.9 406.3 590.5 348.6M518.6 447.4Q565.6 414.7 597.9 358.9M519.8 453.4Q569.0 424.0 605.1 370.6M520.6 459.1Q571.6 432.9 611.1 381.9M521.0 465.1Q573.7 442.4 616.6 394.2" stroke="#4973a5" stroke-width="1.6" stroke-opacity="0.85" fill="none" stroke-dasharray="6 1.5" stroke-dashoffset="3.75"/><path d="M520.9 472.3Q575.3 453.8 621.9 409.1M520.4 478.3Q575.9 463.5 625.5 422.0M519.5 484.0Q575.9 472.8 628.1 434.5M518.3 489.8Q575.3 482.3 629.9 447.6M516.6 495.5Q574.0 491.8 630.9 460.8M514.6 501.0Q572.1 501.1 630.9 473.8M512.1 506.6Q569.5 510.5 630.0 487.3M509.5 511.7Q566.4 519.2 628.4 499.9M506.4 516.6Q562.8 527.9 625.8 512.7M502.9 521.6Q558.4 536.6 622.3 525.6M499.1 526.2Q553.5 544.8 618.1 538.1M495.1 530.6Q548.0 552.8 612.9 550.3M491.0 534.5Q542.4 559.9 607.3 561.5M486.3 538.3Q535.9 567.1 600.5 573.1M481.4 541.8Q529.0 573.8 593.1 584.0M476.4 544.9Q521.7 580.0 585.0 594.3M471.1 547.8Q513.9 585.8 576.0 604.3M465.7 550.2Q505.9 590.9 566.7 613.4M460.3 552.2Q497.8 595.4 557.0 621.8M454.5 554.0Q489.0 599.6 546.3 629.8M448.6 555.4Q479.9 603.1 535.1 637.1M442.7 556.3Q470.8 606.0 523.5 643.6M436.8 556.9Q461.5 608.3 511.6 649.2M431.0 557.1Q452.3 610.0 499.6 654.0M425.2 556.9Q442.9 611.1 487.3 658.0M419.1 556.3Q433.1 611.5 474.2 661.3M413.3 555.4Q423.6 611.4 461.3 663.7M407.4 554.0Q413.9 610.5 447.9 665.3M401.9 552.3Q404.8 609.2 435.2 666.0M396.1 550.1Q395.0 607.1 421.4 665.8M390.8 547.7Q385.9 604.4 408.3 664.7M385.7 545.0Q377.1 601.3 395.6 662.9M380.6 541.8Q368.3 597.5 382.7 660.1M375.6 538.2Q359.5 592.9 369.4 656.4M371.2 534.6Q351.5 588.1 357.4 652.1M366.7 530.4Q343.4 582.4 344.8 646.7M362.9 526.3Q336.4 576.7 333.7 641.0M359.1 521.7Q329.3 570.3 322.3 634.2M355.7 516.8Q322.7 563.4 311.5 626.7M352.5 511.5Q316.2 555.7 300.6 618.1M349.8 506.5Q310.8 548.3 291.2 609.6M347.4 501.0Q305.6 540.1 281.9 599.9M345.4 495.4Q301.0 531.6 273.3 589.7M343.7 489.8Q297.1 523.1 265.6 579.3M342.5 484.3Q293.9 514.6 258.8 568.7M341.6 478.2Q290.9 505.2 252.2 556.8M341.1 472.2Q288.7 495.8 246.6 544.7M341.0 466.6Q287.3 486.8 242.1 533.0M341.3 460.5Q286.3 477.0 238.0 520.0M342.0 454.7Q286.0 467.6 235.0 507.3M343.1 448.9Q286.3 458.1 232.8 494.4M344.6 443.2Q287.3 448.6 231.5 481.4M346.4 437.7Q288.9 439.5 231.0 468.6M348.5 432.3Q291.1 430.4 231.4 455.7M351.2 426.8Q294.0 421.0 232.7 442.2M354.1 421.7Q297.4 412.2 234.8 429.4M357.2 417.0Q301.3 403.9 237.7 417.1M361.0 412.0Q306.1 395.1 241.8 403.9M364.7 407.7Q311.0 387.4 246.2 392.2M369.0 403.4Q316.8 379.6 251.8 380.0M373.5 399.4Q323.0 372.2 258.2 368.2M378.2 395.8Q329.7 365.3 265.3 357.2M383.0 392.6Q336.6 359.0 272.8 346.8M388.1 389.7Q343.9 353.2 281.1 336.9M393.5 387.0Q351.9 347.7 290.3 327.2M399.0 384.7Q360.1 342.8 300.1 318.3M404.6 382.8Q368.7 338.4 310.4 310.1M410.4 381.3Q377.4 334.6 321.2 302.5M416.2 380.1Q386.4 331.4 332.4 295.7M422.2 379.3Q395.8 328.8 344.3 289.6M428.2 378.9Q405.3 326.7 356.6 284.2M433.9 378.9Q414.4 325.4 368.5 279.9M439.8 379.3Q423.9 324.6 381.1 276.3M445.7 380.1Q433.5 324.5 394.1 273.4M451.8 381.3Q443.5 325.0 407.7 271.4M457.3 382.8Q452.6 326.0 420.2 270.3M463.2 384.8Q462.4 327.9 434.1 270.0M468.6 387.1Q471.7 330.2 447.2 270.7M473.8 389.6Q480.5 333.1 460.0 272.1M478.8 392.5Q489.2 336.5 472.7 274.4M483.9 395.9Q498.0 340.7 485.8 277.6M488.7 399.6Q506.7 345.6 498.9 281.8M493.0 403.4Q514.4 350.6 510.7 286.4M497.1 407.6Q522.0 356.2 522.5 291.9M501.0 412.1Q529.3 362.5 534.2 298.4M504.7 416.9Q536.3 369.3 545.5 305.7M507.9 421.7Q542.6 376.3 556.0 313.4M510.9 427.0Q548.6 384.0 566.2 322.1M513.5 432.3Q553.9 391.9 575.7 331.3M515.7 437.8Q558.8 400.1 584.5 341.1M517.4 443.2Q562.9 408.3 592.4 351.0M518.9 448.9Q566.5 417.0 599.8 361.8M520.0 454.7Q569.7 426.0 606.5 373.1M520.7 460.5Q572.1 435.1 612.4 384.6M521.0 466.5Q574.1 444.7 617.7 397.1" stroke="#4973a5" stroke-width="1.6" stroke-opacity="0.85" fill="none" stroke-dasharray="6 1.5" stroke-dashoffset="5.62"/></g><defs><linearGradient id="jg" x1="0" y1="0" x2="0.3" y2="1"><stop offset="0" stop-color="#fff" stop-opacity="0"/><stop offset="0.45" stop-color="#fff" stop-opacity="0.15"/><stop offset="1" stop-color="#fff" stop-opacity="1"/></linearGradient><mask id="jm" maskUnits="userSpaceOnUse" x="300" y="330" width="280" height="280"><rect x="300" y="330" width="280" height="280" fill="url(#jg)"/></mask></defs><g mask="url(#jm)"><ellipse cx="434" cy="468" rx="112" ry="113" fill="none" stroke="#7da2cf" stroke-width="7" stroke-opacity="0.3" stroke-dasharray="2.2 1.6"/></g><path d="M622.1 470.0L621.9 478.4L621.5 486.9L620.6 495.3L619.4 503.7L617.9 512.0L616.0 520.2L613.7 528.4L611.1 536.5L608.2 544.4L604.9 552.2L601.2 559.9L597.3 567.4L593.0 574.8L588.3 581.9L583.4 588.9L578.1 595.6L572.6 602.0L566.7 608.2L560.6 614.2L554.2 619.8L547.6 625.2L540.7 630.3L533.6 635.0L526.3 639.4L518.8 643.5L511.1 647.2L503.3 650.6L495.3 653.6L487.2 656.2L479.0 658.5L470.7 660.4L462.3 661.9L453.9 663.0L445.5 663.8L437.0 664.2L428.5 664.2L420.0 663.9L411.6 663.2L403.2 662.1L394.9 660.7L386.6 658.9L378.4 656.8L370.4 654.3L362.4 651.6L354.6 648.4L346.9 645.0L339.3 641.3L332.0 637.2L324.7 632.9L317.7 628.2L310.9 623.3L304.2 618.1L297.8 612.6L291.6 606.9L285.7 600.8L280.0 594.6L274.6 588.1L269.5 581.4L264.6 574.4L260.0 567.3L255.8 559.9L251.9 552.4L248.3 544.6L245.0 536.8L242.1 528.8L239.6 520.6L237.5 512.4L235.7 504.0L234.3 495.6L233.2 487.1L232.6 478.6L232.4 470.0L232.5 461.4L233.1 452.9L234.0 444.4L235.4 435.9L237.1 427.6L239.2 419.3L241.7 411.1L244.6 403.1L247.8 395.1L251.4 387.4L255.3 379.8L259.5 372.4L264.1 365.2L268.9 358.3L274.1 351.5L279.6 345.0L285.3 338.8L291.3 332.8L297.5 327.0L304.0 321.6L310.6 316.4L317.5 311.5L324.6 306.9L331.9 302.6L339.3 298.7L346.9 295.0L354.6 291.7L362.5 288.6L370.5 286.0L378.6 283.6L386.7 281.6L395.0 279.9L403.3 278.6L411.7 277.7L420.1 277.1L428.5 276.8L436.9 276.9L445.4 277.4L453.7 278.2L462.1 279.4L470.4 281.0L478.6 283.0L486.8 285.3L494.8 287.9L502.7 290.9L510.4 294.3L518.0 298.0L525.5 302.0L532.7 306.4L539.8 311.1L546.6 316.1L553.2 321.4L559.6 327.0L565.6 332.9L571.5 339.0L577.0 345.4L582.3 352.0L587.2 358.8L591.9 365.9L596.2 373.2L600.3 380.6L604.0 388.2L607.3 395.9L610.3 403.8L613.0 411.8L615.4 419.9L617.4 428.1L619.0 436.4L620.3 444.7L621.3 453.1L621.8 461.6Z" fill="none" stroke="#1f3a62" stroke-width="1.2" stroke-opacity=".7"/><ellipse cx="434" cy="464" rx="97.5" ry="100" fill="#c9cec6" /><g clip-path="url(#cw)"><path d="M494.0 467.9Q514.9 464.5 535.5 457.7M493.8 473.5Q514.9 472.0 536.0 467.1M493.0 478.7Q514.2 479.1 535.7 476.1M491.8 483.9Q512.9 486.2 534.6 485.1M490.2 489.1Q511.0 493.2 532.6 494.1M488.1 493.9Q508.4 499.9 529.9 502.7M485.6 498.7Q505.3 506.5 526.4 511.2M482.6 503.2Q501.5 512.8 522.1 519.3M479.2 507.4Q497.3 518.6 517.2 527.0M475.4 511.4Q492.3 524.3 511.4 534.5M471.4 514.9Q487.2 529.1 505.3 540.9M467.1 518.1Q481.4 533.7 498.4 547.1M462.5 520.8Q475.5 537.6 491.2 552.4M457.7 523.1Q469.1 541.0 483.4 557.2M452.5 525.1Q462.2 543.9 475.0 561.4M447.3 526.5Q455.3 546.2 466.4 564.7M441.9 527.5Q448.1 547.8 457.5 567.3M436.8 527.9Q441.2 548.7 448.9 568.9M431.3 527.9Q433.7 549.0 439.5 569.9M425.9 527.5Q426.5 548.7 430.5 569.9M420.6 526.5Q419.3 547.7 421.3 569.2M415.5 525.1Q412.3 546.0 412.4 567.7M410.5 523.2Q405.4 543.8 403.6 565.4M405.5 520.8Q398.6 540.9 394.8 562.2M400.9 518.0Q392.2 537.4 386.5 558.3M396.6 514.9Q386.2 533.4 378.6 553.7M392.6 511.4Q380.6 528.9 371.4 548.5M388.8 507.4Q375.2 523.8 364.2 542.4M385.5 503.3Q370.5 518.3 357.9 535.9M382.5 498.7Q366.2 512.4 352.1 528.7M379.9 494.0Q362.5 506.1 346.9 521.1M377.9 489.2Q359.5 499.8 342.6 513.4M376.2 483.9Q356.9 492.8 338.9 504.7M375.0 478.7Q355.0 485.8 336.0 496.2M374.2 473.3Q353.7 478.5 333.8 487.0M374.0 467.9Q353.1 471.3 332.5 478.1M374.2 462.7Q353.1 464.2 332.0 469.2M374.9 457.4Q353.7 457.0 332.3 460.0M376.2 452.0Q355.1 449.6 333.5 450.7M377.8 447.0Q357.0 442.8 335.4 442.0M379.9 442.1Q359.5 436.1 338.1 433.3M382.4 437.3Q362.7 429.5 341.6 424.8M385.4 432.8Q366.4 423.3 345.8 416.8M388.9 428.4Q370.9 417.2 351.0 408.8M392.5 424.7Q375.6 411.9 356.5 401.7M396.6 421.1Q380.8 406.9 362.7 395.0M400.9 418.0Q386.5 402.4 369.5 389.0M405.5 415.2Q392.6 398.4 376.9 383.5M410.4 412.8Q399.0 394.9 384.7 378.7M415.5 410.9Q405.8 392.1 393.0 374.6M420.7 409.5Q412.7 389.8 401.6 371.3M426.0 408.5Q419.8 388.2 410.4 368.8M431.4 408.1Q427.1 387.3 419.4 367.0M436.6 408.1Q434.2 387.0 428.3 366.2M442.1 408.5Q441.5 387.4 437.6 366.1M447.3 409.5Q448.6 388.3 446.5 366.8M452.5 410.9Q455.8 390.0 455.7 368.3M457.6 412.8Q462.7 392.2 464.5 370.7M462.4 415.1Q469.3 395.1 473.1 373.8M467.1 417.9Q475.8 398.6 481.4 377.7M471.4 421.1Q481.8 402.6 489.3 382.3M475.4 424.6Q487.4 407.1 496.6 387.5M479.2 428.5Q492.7 412.2 503.7 393.6M482.5 432.7Q497.4 417.6 510.1 400.0M485.6 437.3Q501.8 423.7 516.0 407.4M488.0 441.9Q505.4 429.7 520.9 414.6M490.2 446.9Q508.6 436.4 525.5 422.8M491.9 452.1Q511.1 443.3 529.2 431.3M493.0 457.2Q513.0 450.1 532.0 439.7M493.8 462.7Q514.3 457.5 534.2 448.9" stroke="#eaeee6" stroke-width="1.2" stroke-opacity="0.9" fill="none" stroke-dasharray="2.2 1.2" stroke-dashoffset="0.00"/><path d="M494.0 469.3Q515.0 466.4 535.7 460.1M493.6 474.7Q514.8 473.7 536.0 469.2M492.8 480.0Q514.0 480.9 535.5 478.4M491.4 485.3Q512.5 488.1 534.1 487.6M489.7 490.3Q510.4 494.9 532.0 496.3M487.4 495.3Q507.6 501.8 529.0 505.1M484.8 500.0Q504.3 508.3 525.3 513.5M481.8 504.3Q500.5 514.3 521.0 521.3M478.3 508.5Q496.0 520.1 515.8 528.9M474.5 512.3Q491.1 525.5 510.0 536.1M470.4 515.7Q485.8 530.3 503.6 542.5M465.9 518.8Q479.9 534.7 496.6 548.5M461.3 521.4Q473.8 538.5 489.2 553.8M456.4 523.6Q467.4 541.8 481.4 558.3M451.2 525.5Q460.5 544.5 472.9 562.3M445.9 526.8Q453.4 546.6 464.2 565.4M440.8 527.6Q446.6 548.0 455.6 567.7M435.3 528.0Q439.1 548.8 446.3 569.3M429.9 527.9Q431.8 549.0 437.2 569.9M424.5 527.2Q424.6 548.5 428.0 569.8M419.2 526.2Q417.4 547.3 418.9 568.9M414.3 524.7Q410.6 545.6 410.3 567.2M409.1 522.6Q403.5 543.0 401.2 564.6M404.4 520.2Q397.0 540.0 392.7 561.3M399.8 517.3Q390.6 536.4 384.5 557.2M395.6 514.1Q384.9 532.4 376.9 552.5M391.6 510.5Q379.2 527.7 369.5 547.0M387.9 506.4Q374.0 522.4 362.5 540.7M384.7 502.1Q369.4 516.8 356.3 534.1M381.9 497.7Q365.4 511.0 350.9 527.1M379.4 492.9Q361.8 504.6 345.8 519.3M377.4 487.9Q358.8 498.0 341.6 511.2M375.8 482.7Q356.4 491.1 338.1 502.8M374.8 477.5Q354.6 484.1 335.4 494.1M374.1 471.9Q353.5 476.7 333.4 484.8M374.0 466.5Q353.0 469.4 332.3 475.7M374.4 461.2Q353.2 462.2 332.0 466.6M375.2 456.0Q354.0 455.1 332.5 457.6M376.5 450.7Q355.5 448.0 333.9 448.6M378.3 445.6Q357.7 440.9 336.1 439.5M380.5 440.8Q360.3 434.3 338.9 431.0M383.2 436.1Q363.6 427.9 342.6 422.7M386.3 431.6Q367.6 421.6 347.1 414.5M389.7 427.5Q372.0 415.9 352.3 407.0M393.5 423.7Q376.9 410.6 358.0 400.0M397.6 420.3Q382.3 405.7 364.4 393.4M402.1 417.2Q388.2 401.2 371.5 387.4M406.7 414.6Q394.2 397.5 378.8 382.2M411.8 412.3Q400.8 394.1 386.9 377.5M416.8 410.5Q407.6 391.4 395.2 373.7M421.9 409.2Q414.3 389.4 403.5 370.7M427.3 408.4Q421.6 388.0 412.6 368.3M432.6 408.0Q428.7 387.2 421.4 366.8M438.1 408.1Q436.1 387.0 430.8 366.1M443.3 408.7Q443.2 387.5 439.7 366.2M448.6 409.8Q450.4 388.7 448.8 367.1M453.8 411.3Q457.4 390.5 457.8 368.8M458.7 413.3Q464.3 392.9 466.6 371.3M463.5 415.8Q470.9 395.9 475.1 374.6M468.2 418.7Q477.4 399.6 483.6 378.9M472.5 421.9Q483.3 403.7 491.2 383.6M476.4 425.5Q488.8 408.3 498.5 389.0M480.1 429.6Q494.0 413.6 505.4 395.2M483.3 433.8Q498.5 419.1 511.6 401.8M486.2 438.5Q502.8 425.2 517.3 409.2M488.6 443.2Q506.3 431.5 522.2 416.8M490.6 448.1Q509.2 437.9 526.3 424.7M492.2 453.4Q511.7 445.0 530.0 433.5M493.2 458.5Q513.4 451.9 532.6 441.9M493.9 464.0Q514.5 459.2 534.6 451.1" stroke="#eaeee6" stroke-width="1.2" stroke-opacity="0.9" fill="none" stroke-dasharray="2.2 1.2" stroke-dashoffset="0.85"/><path d="M493.9 470.8Q515.0 468.4 535.9 462.6M493.5 476.1Q514.7 475.5 535.9 471.5M492.5 481.4Q513.6 482.8 535.2 480.7M491.0 486.6Q512.0 489.8 533.7 489.8M489.2 491.5Q509.8 496.5 531.4 498.4M486.9 496.4Q506.9 503.3 528.2 507.0M484.0 501.1Q503.4 509.8 524.2 515.5M480.9 505.4Q499.4 515.7 519.7 523.2M477.4 509.4Q494.9 521.4 514.5 530.7M473.5 513.1Q489.9 526.7 508.5 537.7M469.4 516.5Q484.4 531.4 502.0 544.0M464.8 519.5Q478.5 535.7 494.9 549.8M460.1 522.0Q472.3 539.4 487.4 554.9M455.1 524.2Q465.7 542.5 479.3 559.4M449.9 525.9Q458.7 545.1 470.7 563.2M444.7 527.0Q451.8 547.0 462.2 566.0M439.3 527.8Q444.6 548.3 453.1 568.2M433.9 528.0Q437.3 548.9 444.0 569.5M428.7 527.8Q430.2 548.9 435.2 570.0M423.2 527.0Q422.8 548.2 425.8 569.7M418.0 525.8Q415.7 546.9 416.7 568.5M413.0 524.2Q408.9 545.0 408.0 566.6M408.0 522.1Q401.9 542.4 399.1 563.8M403.2 519.5Q395.4 539.2 390.7 560.3M398.7 516.5Q389.2 535.5 382.6 556.1M394.5 513.1Q383.3 531.1 374.8 551.1M390.6 509.4Q377.8 526.3 367.6 545.4M387.1 505.4Q372.8 521.1 361.0 539.2M383.9 501.0Q368.3 515.4 354.8 532.3M381.2 496.5Q364.4 509.4 349.5 525.2M378.8 491.6Q360.9 502.9 344.7 517.2M376.9 486.5Q358.1 496.2 340.6 509.0M375.5 481.3Q355.9 489.3 337.3 500.5M374.5 476.0Q354.2 482.1 334.8 491.6M374.1 470.8Q353.3 475.2 333.1 482.9M374.1 465.3Q353.0 467.8 332.2 473.6M374.5 460.0Q353.3 460.6 332.1 464.6M375.5 454.5Q354.4 453.2 332.8 455.2M377.0 449.4Q356.0 446.1 334.4 446.2M378.8 444.4Q358.2 439.3 336.7 437.5M381.2 439.6Q361.1 432.7 339.8 428.9M383.9 435.0Q364.6 426.3 343.7 420.7M387.1 430.5Q368.7 420.1 348.4 412.6M390.7 426.5Q373.2 414.4 353.7 405.1M394.6 422.7Q378.3 409.2 359.7 398.1M398.7 419.5Q383.6 404.6 366.0 391.9M403.2 416.5Q389.5 400.3 373.1 386.2M408.0 413.9Q395.8 396.6 380.8 381.0M413.0 411.8Q402.5 393.4 388.9 376.5M418.1 410.1Q409.3 390.8 397.4 372.8M423.3 409.0Q416.3 389.0 405.9 369.9M428.6 408.2Q423.3 387.7 414.7 367.8M434.0 408.0Q430.6 387.1 423.8 366.5M439.5 408.3Q438.0 387.1 433.1 366.0M444.7 409.0Q445.1 387.8 442.1 366.3M449.9 410.1Q452.2 389.1 451.1 367.4M455.2 411.9Q459.4 391.1 460.3 369.4M460.0 413.9Q466.0 393.6 468.7 372.1M464.7 416.5Q472.5 396.7 477.2 375.6M469.3 419.5Q478.9 400.6 485.5 380.0M473.5 422.8Q484.7 404.8 493.1 384.8M477.4 426.6Q490.3 409.7 500.5 390.6M481.0 430.7Q495.2 415.0 507.1 396.9M484.1 434.9Q499.6 420.6 513.1 403.6M486.9 439.6Q503.7 426.8 518.6 411.1M489.2 444.5Q507.1 433.2 523.4 418.9M491.1 449.4Q509.9 439.7 527.4 426.9M492.5 454.8Q512.2 446.8 530.7 435.7M493.5 460.0Q513.7 453.8 533.2 444.3M493.9 465.3Q514.7 461.0 534.9 453.3" stroke="#eaeee6" stroke-width="1.2" stroke-opacity="0.9" fill="none" stroke-dasharray="2.2 1.2" stroke-dashoffset="1.70"/><path d="M493.9 471.9Q515.0 469.9 535.9 464.5M493.2 477.5Q514.5 477.4 535.8 474.0M492.2 482.8Q513.3 484.6 534.9 483.1M490.6 487.8Q511.5 491.6 533.1 492.0M488.7 492.7Q509.1 498.3 530.7 500.6M486.2 497.5Q506.1 504.9 527.4 509.1M483.3 502.2Q502.4 511.3 523.2 517.5M480.1 506.4Q498.3 517.2 518.4 525.2M476.3 510.5Q493.5 522.9 512.8 532.7M472.4 514.1Q488.4 528.0 506.7 539.5M468.2 517.3Q482.9 532.6 500.2 545.6M463.6 520.2Q476.9 536.7 492.9 551.2M458.8 522.6Q470.6 540.3 485.3 556.2M453.9 524.6Q464.0 543.2 477.2 560.4M448.6 526.2Q457.0 545.7 468.6 563.9M443.4 527.3Q450.1 547.4 460.0 566.6M438.0 527.9Q442.8 548.5 450.9 568.6M432.6 528.0Q435.5 549.0 441.9 569.7M427.3 527.6Q428.3 548.8 432.7 570.0M421.9 526.8Q421.0 547.9 423.5 569.5M416.7 525.5Q413.9 546.5 414.5 568.1M411.7 523.7Q407.1 544.4 405.7 566.0M406.7 521.4Q400.3 541.6 396.9 563.0M402.2 518.9Q394.0 538.4 388.8 559.4M397.6 515.7Q387.7 534.4 380.6 554.9M393.6 512.3Q382.0 530.1 373.1 549.8M389.8 508.5Q376.6 525.2 366.0 544.1M386.3 504.4Q371.7 519.8 359.5 537.6M383.2 499.9Q367.3 513.9 353.5 530.6M380.6 495.3Q363.5 507.8 348.2 523.2M378.4 490.4Q360.2 501.4 343.7 515.4M376.5 485.2Q357.4 494.5 339.7 506.9M375.2 480.0Q355.4 487.6 336.6 498.3M374.4 474.8Q354.0 480.5 334.3 489.6M374.0 469.4Q353.2 473.2 332.8 480.5M374.1 464.0Q353.0 466.0 332.1 471.4M374.7 458.6Q353.5 458.7 332.2 462.1M375.8 453.4Q354.7 451.6 333.1 453.2M377.4 448.1Q356.5 444.4 334.9 444.0M379.3 443.3Q358.9 437.8 337.3 435.5M381.8 438.4Q361.9 431.1 340.7 426.8M384.7 433.8Q365.6 424.6 344.8 418.5M387.9 429.6Q369.6 418.8 349.5 410.9M391.5 425.6Q374.3 413.2 355.0 403.5M395.6 421.9Q379.5 408.0 361.2 396.6M399.7 418.7Q385.0 403.5 367.7 390.5M404.5 415.8Q391.2 399.2 375.2 384.7M409.1 413.4Q397.3 395.8 382.6 379.9M414.3 411.3Q404.2 392.7 391.0 375.5M419.4 409.8Q410.9 390.4 399.3 372.1M424.6 408.7Q418.0 388.6 408.0 369.4M429.9 408.1Q425.0 387.5 416.8 367.5M435.3 408.0Q432.4 387.0 426.0 366.3M440.7 408.4Q439.6 387.2 435.1 366.0M446.0 409.2Q446.9 388.0 444.3 366.5M451.3 410.6Q454.1 389.5 453.6 367.9M456.4 412.4Q461.1 391.7 462.5 370.1M461.2 414.5Q467.6 394.3 470.8 372.9M465.9 417.2Q474.1 397.6 479.3 376.6M470.3 420.2Q480.3 401.5 487.3 381.1M474.5 423.7Q486.0 405.9 494.9 386.2M478.2 427.5Q491.4 410.8 501.9 391.9M481.7 431.6Q496.3 416.2 508.5 398.3M484.8 436.1Q500.7 422.0 514.5 405.4M487.4 440.7Q504.5 428.1 519.7 412.7M489.7 445.7Q507.8 434.7 524.4 420.8M491.5 450.8Q510.6 441.6 528.3 429.2M492.8 455.9Q512.6 448.4 531.4 437.6M493.6 461.3Q514.0 455.6 533.7 446.6M494.0 466.7Q514.8 462.9 535.2 455.6" stroke="#eaeee6" stroke-width="1.2" stroke-opacity="0.9" fill="none" stroke-dasharray="2.2 1.2" stroke-dashoffset="2.55"/></g><ellipse cx="434" cy="464" rx="98" ry="100.5" fill="none" stroke="#1a2f50" stroke-width="1.6" stroke-opacity=".75"/><ellipse cx="434.4" cy="472" rx="66" ry="64.5" fill="#088388" /><g clip-path="url(#ct)"><path d="M452.6 471.5Q477.6 472.4 502.5 474.9M452.5 472.9Q477.4 475.7 502.1 480.1M451.2 478.4Q473.9 488.9 496.0 500.8M449.6 481.5Q469.8 496.1 489.2 512.1M446.8 484.7Q463.2 503.6 478.3 523.6M440.2 488.6Q447.0 512.7 452.4 537.1M438.7 489.0Q443.6 513.5 446.9 538.4M437.4 489.3Q440.5 514.1 441.9 539.1M423.5 485.7Q407.4 504.8 390.1 522.9M422.9 485.2Q406.0 503.6 387.9 520.9M420.9 483.1Q401.2 498.6 380.6 512.8M416.6 472.2Q391.6 472.3 366.6 470.8M421.4 459.3Q403.7 441.6 387.1 422.8M424.0 457.0Q410.0 436.2 397.3 414.6M427.1 455.1Q417.5 432.0 409.4 408.3M429.0 454.4Q422.1 430.4 416.8 405.9M433.1 453.6Q432.0 428.6 432.4 403.5M438.8 454.0Q445.5 429.9 453.7 406.2M440.2 454.4Q448.7 430.9 458.8 407.9M445.7 457.3Q461.8 438.2 479.2 420.1M449.6 461.5Q470.8 448.3 492.9 436.5M451.7 465.9Q475.8 459.1 500.3 453.8M452.4 468.6Q477.2 465.5 502.2 464.0" stroke="#38d9da" stroke-width="1.4" stroke-opacity="0.95" fill="none" stroke-dasharray="3 1.3" stroke-dashoffset="0.00"/><path d="M452.1 475.7Q476.2 482.5 499.8 490.8M444.6 486.5Q457.7 507.8 469.4 529.9M435.3 489.5Q435.3 514.5 433.7 539.5M431.8 489.3Q427.0 513.8 420.6 538.1M429.7 488.8Q421.9 512.6 412.7 535.9M422.4 484.7Q404.8 502.5 386.1 519.2M419.7 481.6Q398.4 494.8 376.4 506.6M416.8 474.3Q392.0 477.4 367.0 478.8M416.7 470.0Q391.8 467.1 367.2 462.6M416.7 469.4Q392.0 465.6 367.5 460.3M417.5 465.9Q394.0 457.3 371.1 447.2M420.9 459.8Q402.5 442.9 385.2 424.7M434.5 453.5Q435.4 428.5 437.8 403.6M436.0 453.6Q438.9 428.7 443.4 404.1M444.0 456.1Q457.7 435.2 472.8 415.3M448.8 460.4Q469.0 445.7 490.2 432.3M452.1 467.3Q476.6 462.3 501.4 458.9" stroke="#38d9da" stroke-width="1.4" stroke-opacity="0.95" fill="none" stroke-dasharray="3 1.3" stroke-dashoffset="0.54"/><path d="M452.6 472.1Q477.5 473.9 502.4 477.3M439.4 488.8Q445.3 513.2 449.5 537.8M438.2 489.1Q442.2 513.8 444.7 538.8M418.0 478.3Q394.5 487.0 370.5 494.2M417.7 477.7Q393.9 485.4 369.6 491.6M417.3 476.3Q393.0 482.2 368.3 486.5M417.1 467.3Q393.0 460.7 369.3 452.5M425.8 455.8Q414.4 433.5 404.4 410.6M435.3 453.5Q437.3 428.6 440.8 403.8M445.2 456.9Q460.6 437.2 477.3 418.5M447.4 458.8Q465.7 441.8 485.1 426.0M448.3 459.8Q467.8 444.2 488.3 429.8M450.6 463.3Q473.3 452.7 496.6 443.5M451.5 465.3Q475.3 457.6 499.5 451.4M451.9 466.6Q476.2 460.7 500.9 456.3" stroke="#38d9da" stroke-width="1.4" stroke-opacity="0.95" fill="none" stroke-dasharray="3 1.3" stroke-dashoffset="1.07"/><path d="M451.7 477.1Q475.2 485.7 498.1 495.7M451.5 477.7Q474.6 487.2 497.2 498.1M450.3 480.4Q471.6 493.4 492.1 507.9M449.9 480.9Q470.8 494.7 490.7 509.9M448.8 482.6Q467.9 498.7 486.0 516.0M447.9 483.7Q465.7 501.2 482.3 519.9M444.0 486.8Q456.4 508.6 467.3 531.1M443.4 487.2Q454.9 509.4 464.9 532.4M442.8 487.5Q453.4 510.2 462.5 533.5M440.8 488.4Q448.6 512.2 454.9 536.4M429.0 488.6Q420.4 512.1 410.3 535.0M419.3 481.0Q397.6 493.3 375.0 504.3M416.7 472.9Q391.7 473.9 366.6 473.3M417.3 466.6Q393.5 459.0 370.1 449.8M418.5 463.4Q396.7 451.3 375.5 437.8M418.9 462.7Q397.5 449.8 376.9 435.5M419.2 462.1Q398.4 448.4 378.4 433.3M420.0 460.9Q400.3 445.6 381.6 428.9M420.5 460.4Q401.4 444.2 383.4 426.8M422.4 458.2Q406.2 439.2 391.2 419.2M424.6 456.6Q411.4 435.3 399.5 413.2M430.3 454.0Q425.3 429.5 421.8 404.7M442.2 455.2Q453.5 432.9 466.2 411.3M449.2 460.9Q469.9 446.9 491.5 434.3M451.0 464.0Q474.0 454.4 497.7 446.2M451.2 464.6Q474.7 455.9 498.7 448.7M452.2 467.9Q476.9 463.9 501.8 461.4" stroke="#38d9da" stroke-width="1.4" stroke-opacity="0.95" fill="none" stroke-dasharray="3 1.3" stroke-dashoffset="1.61"/><path d="M452.5 473.6Q477.2 477.5 501.6 482.9M452.4 474.4Q476.9 479.3 501.1 485.7M451.9 476.3Q475.8 483.9 499.1 493.0M451.0 479.0Q473.3 490.2 495.0 502.8M450.6 479.7Q472.4 492.0 493.4 505.6M449.1 482.1Q468.8 497.6 487.4 514.4M445.2 486.0Q459.2 506.8 471.9 528.4M442.2 487.8Q451.9 510.9 460.1 534.6M431.2 489.2Q425.5 513.5 418.3 537.5M428.4 488.4Q418.9 511.5 408.0 534.1M420.0 482.0Q399.2 495.9 377.5 508.5M417.5 477.1Q393.5 484.1 369.0 489.5M417.7 465.2Q394.6 455.7 372.1 444.7M418.0 464.6Q395.2 454.3 373.1 442.5M418.2 464.0Q395.9 452.7 374.3 440.0M423.4 457.4Q408.6 437.3 395.0 416.2M426.4 455.5Q415.9 432.8 406.8 409.5M429.7 454.2Q423.7 429.9 419.3 405.2M432.4 453.6Q430.3 428.7 429.8 403.7M438.2 453.9Q444.0 429.5 451.4 405.6M447.8 459.2Q466.7 442.9 486.7 427.7M452.6 470.8Q477.6 470.7 502.6 472.3" stroke="#38d9da" stroke-width="1.4" stroke-opacity="0.95" fill="none" stroke-dasharray="3 1.3" stroke-dashoffset="2.15"/><path d="M447.3 484.2Q464.3 502.6 480.2 522.0M436.0 489.4Q436.9 514.4 436.3 539.5M434.5 489.5Q433.5 514.5 431.0 539.4M432.4 489.4Q428.5 514.1 423.1 538.5M425.8 487.2Q412.9 508.6 398.6 529.2M421.8 484.2Q403.5 501.2 384.0 517.0M421.4 483.7Q402.4 500.1 382.5 515.2M420.5 482.7Q400.3 497.5 379.2 511.0M417.1 475.7Q392.6 480.6 367.8 484.0M416.6 471.5Q391.6 470.6 366.7 468.1M422.9 457.8Q407.5 438.1 393.2 417.5M425.2 456.1Q413.0 434.3 402.2 411.7M427.7 454.9Q418.9 431.5 411.5 407.5M428.3 454.6Q420.5 430.9 414.1 406.7M431.1 453.8Q427.2 429.1 424.9 404.2M431.8 453.7Q428.7 428.9 427.3 403.9M439.5 454.2Q447.1 430.3 456.2 407.0M440.9 454.6Q450.4 431.5 461.5 409.0M444.6 456.5Q459.2 436.2 475.1 416.9M446.8 458.2Q464.3 440.4 483.0 423.8M452.5 469.4Q477.4 467.4 502.4 467.0" stroke="#38d9da" stroke-width="1.4" stroke-opacity="0.95" fill="none" stroke-dasharray="3 1.3" stroke-dashoffset="2.69"/><path d="M452.3 475.0Q476.6 480.8 500.5 488.1M448.3 483.2Q466.7 500.1 484.0 518.2M446.3 485.2Q461.8 504.8 476.0 525.4M445.8 485.6Q460.5 505.8 474.0 526.9M433.3 489.4Q430.5 514.3 426.1 539.0M430.5 489.0Q423.8 513.1 415.7 536.8M427.7 488.1Q417.2 510.8 405.3 532.9M424.7 486.5Q410.1 506.8 394.2 526.2M424.0 486.1Q408.7 505.8 392.0 524.5M418.5 479.6Q395.8 490.1 372.4 499.1M418.2 479.0Q395.1 488.6 371.4 496.7M416.7 473.6Q391.8 475.7 366.8 476.1M416.6 470.8Q391.7 469.0 366.9 465.6M416.8 468.7Q392.3 464.0 368.0 457.7M419.6 461.5Q399.3 446.9 380.0 431.0M436.7 453.6Q440.6 428.9 446.0 404.5M437.4 453.7Q442.3 429.2 448.7 405.0M441.5 454.9Q451.9 432.1 463.8 410.1M442.8 455.5Q455.1 433.7 468.7 412.7M443.4 455.8Q456.5 434.5 470.9 414.0M446.3 457.8Q463.2 439.4 481.3 422.1M450.3 462.7Q472.5 451.2 495.5 441.2" stroke="#38d9da" stroke-width="1.4" stroke-opacity="0.95" fill="none" stroke-dasharray="3 1.3" stroke-dashoffset="3.22"/><path d="M441.5 488.1Q450.3 511.5 457.7 535.5M436.8 489.4Q438.9 514.3 439.4 539.3M433.9 489.5Q432.1 514.4 428.7 539.2M427.1 487.9Q415.9 510.2 403.3 531.9M426.5 487.6Q414.4 509.4 400.9 530.6M425.2 486.8Q411.3 507.6 396.1 527.6M418.9 480.3Q396.7 491.8 373.8 501.9M416.9 475.0Q392.2 478.9 367.3 481.2M416.9 468.0Q392.6 462.2 368.7 454.9M421.8 458.8Q404.7 440.6 388.8 421.2M433.9 453.5Q433.9 428.5 435.5 403.5M450.0 462.2Q471.8 449.9 494.4 439.1M452.5 470.0Q477.5 468.9 502.6 469.4" stroke="#38d9da" stroke-width="1.4" stroke-opacity="0.95" fill="none" stroke-dasharray="3 1.3" stroke-dashoffset="3.76"/></g><ellipse cx="434.9" cy="471.3" rx="23.5" ry="22.5" fill="#3f3c3b" /><g clip-path="url(#cd)"><path d="M426.9 431.3L475.4 466.6M425.5 433.2L474.0 468.5M424.1 435.1L472.7 470.3M422.8 436.9L471.3 472.2M421.4 438.8L470.0 474.0M420.1 440.6L468.6 475.9M418.7 442.5L467.3 477.8M417.4 444.4L465.9 479.6M416.0 446.2L464.6 481.5M414.7 448.1L463.2 483.4M413.3 449.9L461.9 485.2M412.0 451.8L460.5 487.1M410.6 453.7L459.2 488.9M409.3 455.5L457.8 490.8M407.9 457.4L456.5 492.7M406.6 459.2L455.1 494.5M405.2 461.1L453.8 496.4M403.9 463.0L452.4 498.2M402.5 464.8L451.1 500.1M401.2 466.7L449.7 502.0M399.8 468.6L448.4 503.8M398.5 470.4L447.0 505.7M397.1 472.3L445.7 507.5M395.8 474.1L444.3 509.4M394.4 476.0L442.9 511.3" stroke="#6c6764" stroke-width="1" stroke-opacity=".8"/></g><ellipse cx="434.9" cy="471.3" rx="23.3" ry="22.3" fill="none" stroke="#1b3436" stroke-width="1.2" stroke-opacity=".7"/></svg><!--/EMB-->

<!-- right panel stats -->
<div id="stats">
<div class="a" style="left:857px;top:119px;">Machine:</div><div class="a" style="left:952px;top:119px;">Tajima</div>
<div class="a" style="left:857px;top:137px;">Color changes:</div><div class="a" style="left:952px;top:137px;">3</div>
<div class="a" style="left:857px;top:155px;">Stops:</div><div class="a" style="left:952px;top:155px;">4</div>
<div class="a" style="left:857px;top:173px;">Trims:</div><div class="a" style="left:952px;top:173px;">7</div>
<div class="a" style="left:857px;top:191px;">Left:</div><div class="a" style="left:952px;top:191px;">48.4 mm</div>
<div class="a" style="left:857px;top:209px;">Right:</div><div class="a" style="left:952px;top:209px;">48.4 mm</div>
<div class="a" style="left:857px;top:227px;">Up:</div><div class="a" style="left:952px;top:227px;">48.0 mm</div>
<div class="a" style="left:857px;top:245px;">Down:</div><div class="a" style="left:952px;top:245px;">48.0 mm</div>
<div class="a" style="left:857px;top:263px;">EndX:</div><div class="a" style="left:952px;top:263px;">0.00 in</div>
<div class="a" style="left:857px;top:281px;">EndY:</div><div class="a" style="left:952px;top:281px;">0.00 in</div>
<div class="a" style="left:857px;top:299px;">Max Stitch:</div><div class="a" style="left:952px;top:299px;">6.8 mm</div>
<div class="a" style="left:857px;top:317px;">Min Stitch:</div><div class="a" style="left:952px;top:317px;">0.4 mm</div>
<div class="a" style="left:857px;top:335px;">Max Jump:</div><div class="a" style="left:952px;top:335px;">6.8 mm</div>
<div class="a" style="left:857px;top:353px;">Total Bobbin:</div><div class="a" style="left:952px;top:353px;">173.19ft</div>
<div class="a" style="left:857px;top:371px;">Stop Sequence:</div>
<div class="a h" style="left:857px;top:390px;">#</div>
<div class="a h" style="left:874px;top:390px;">N#</div>
<div class="a h r" style="left:900px;width:47px;top:390px;">St.</div>
<div class="a h" style="left:953px;top:390px;">Description</div>
<div class="a h r" style="left:1030px;width:43px;top:390px;">Code</div>
<div class="a h" style="left:1079px;top:390px;">Brand</div>
<div class="a" style="left:857px;top:407px;">1.</div>
<div class="a" style="left:874px;top:407px;">3</div>
<div style="position:absolute;left:895px;top:408px;width:9px;height:9px;background:#2a2a2a;border:1px solid #151515;"></div>
<div class="a r" style="left:900px;width:47px;top:407px;">440</div>
<div class="a" style="left:953px;top:407px;">Amber Black</div>
<div class="a r" style="left:1030px;width:43px;top:407px;">1007</div>
<div class="a" style="left:1079px;top:407px;">Madeira Classic 40</div>
<div class="a" style="left:857px;top:425px;">2.</div>
<div class="a" style="left:874px;top:425px;">4</div>
<div style="position:absolute;left:895px;top:426px;width:9px;height:9px;background:#e8e8ec;border:1px solid #a8a8a8;"></div>
<div class="a r" style="left:900px;width:47px;top:425px;">4873</div>
<div class="a" style="left:953px;top:425px;">Natural White</div>
<div class="a r" style="left:1030px;width:43px;top:425px;">1004</div>
<div class="a" style="left:1079px;top:425px;">Madeira Classic 40</div>
<div class="a" style="left:857px;top:443px;">3.</div>
<div class="a" style="left:874px;top:443px;">2</div>
<div style="position:absolute;left:895px;top:444px;width:9px;height:9px;background:#19a9c6;border:1px solid #0f6f88;"></div>
<div class="a r" style="left:900px;width:47px;top:443px;">2436</div>
<div class="a" style="left:953px;top:443px;"></div>
<div class="a r" style="left:1030px;width:43px;top:443px;">1095</div>
<div class="a" style="left:1079px;top:443px;">Madeira Classic 40</div>
<div class="a" style="left:857px;top:461px;">4.</div>
<div class="a" style="left:874px;top:461px;">1</div>
<div style="position:absolute;left:895px;top:462px;width:9px;height:9px;background:#1f4a8e;border:1px solid #173766;"></div>
<div class="a r" style="left:900px;width:47px;top:461px;">13269</div>
<div class="a" style="left:953px;top:461px;"></div>
<div class="a r" style="left:1030px;width:43px;top:461px;">1166</div>
<div class="a" style="left:1079px;top:461px;">Madeira Classic 40</div>
</div>
<div class="ln" style="left:5px;top:119px;width:1px;height:706px;background:#888;"></div>
<div class="ln" style="left:853px;top:370px;width:341px;height:1px;background:#999;"></div>
<div class="ln" style="left:853px;top:478px;width:341px;height:1px;background:#bbb;"></div>

<!-- footer -->
<div class="a" style="left:8px;top:826px;">Created By:</div>
<div class="a" style="left:299px;top:826px;">Last Saved: 26/09/2022 18:51:48</div>
<div class="a" style="left:712px;top:826px;">Printed: 26/09/2022 18:51:50</div>
<div class="a r" style="right:9px;top:826px;">Page 1 of 1</div>
</body></html>
